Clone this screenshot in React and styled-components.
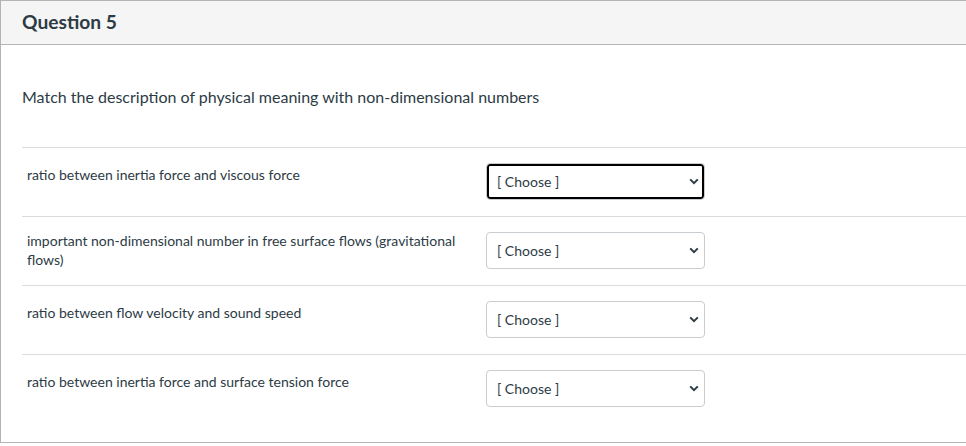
import styled, { createGlobalStyle } from "styled-components";

const Global = createGlobalStyle`
  body {
    margin: 0;
    background: #fff;
    font-family: Lato, "Open Sans", sans-serif;
    color: #2d3b45;
    overflow: hidden;
  }
`;

const Card = styled.div`
  width: 990px;
  border: 1px solid #b4b4b4;
  border-right: none;
  background: #fff;
`;

const Header = styled.div`
  height: 43px;
  background: #f5f5f5;
  border-bottom: 1px solid #b4b4b4;
  display: flex;
  align-items: center;
  padding-left: 21px;
`;

const Title = styled.h2`
  margin: 0 0 2px;
  font-size: 19.2px;
  font-weight: 700;
  color: #2d3b45;
`;

const Body = styled.div`
  padding: 41px 0 19px 21px;
`;

const Prompt = styled.p`
  margin: 0 0 39px;
  font-size: 16px;
  line-height: 22px;
`;

const Row = styled.div`
  display: flex;
  align-items: flex-start;
  border-top: 1px solid #dcdcdc;
  padding: 0 0 0 5px;
  height: 68px;
`;

const Label = styled.div`
  width: 435px;
  padding-top: ${(p) => (p.wrapped ? "14px" : "17px")};
  padding-right: 24px;
  font-size: 14px;
  line-height: 19px;
  color: #2d3b45;
`;

const SelectBox = styled.div`
  margin-top: 15px;
  width: 219px;
  height: 37px;
  box-sizing: border-box;
  border: 1px solid #c7cdd1;
  border-radius: 4px;
  background: #fff;
  display: flex;
  align-items: center;
  justify-content: space-between;
  padding: 0 5px 0 10px;
  font-size: 14px;
  color: #2d3b45;
  box-shadow: ${(p) => (p.focused ? "inset 0 0 0 2px #000" : "none")};
`;

const Chevron = () => (
  <svg width="10" height="7" viewBox="0 0 10 7">
    <path d="M1.2 1.4 L5 5.2 L8.8 1.4" fill="none" stroke="#2d3b45" strokeWidth="2" />
  </svg>
);

const rows = [
  { text: "ratio between inertia force and viscous force" },
  {
    text: "important non-dimensional number in free surface flows (gravitational flows)",
    wrapped: true,
  },
  { text: "ratio between flow velocity and sound speed" },
  { text: "ratio between inertia force and surface tension force" },
];

export default function App() {
  return (
    <>
      <Global />
      <Card>
        <Header>
          <Title>Question 5</Title>
        </Header>
        <Body>
          <Prompt>Match the description of physical meaning with non-dimensional numbers</Prompt>
          {rows.map((r, i) => (
            <Row key={i}>
              <Label wrapped={r.wrapped}>{r.text}</Label>
              <SelectBox focused={i === 0}>
                <span>[ Choose ]</span>
                <Chevron />
              </SelectBox>
            </Row>
          ))}
        </Body>
      </Card>
    </>
  );
}
